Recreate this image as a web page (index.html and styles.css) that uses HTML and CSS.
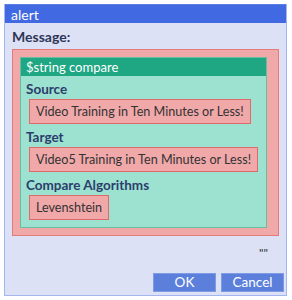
FILE: index.html
```html
<!DOCTYPE html>
<html lang="en">
<head>
    <meta charset="UTF-8">
    <meta name="viewport" content="width=device-width, initial-scale=1.0">
    <title>alert</title>
    <link rel="stylesheet" href="styles.css">
</head>
<body>
    <div class="dialog">
        <div class="dialog-title">alert</div>

        <div class="dialog-body">
            <div class="field-label">Message:</div>

            <div class="message">
                <div class="panel">
                    <div class="panel-title">$string compare</div>
                    <div class="panel-body">
                        <div class="panel-label">Source</div>
                        <div class="value">Video Training in Ten Minutes or Less!</div>

                        <div class="panel-label">Target</div>
                        <div class="value">Video5 Training in Ten Minutes or Less!</div>

                        <div class="panel-label">Compare Algorithms</div>
                        <div class="value">Levenshtein</div>
                    </div>
                </div>
            </div>

            <div class="result">""</div>
        </div>

        <div class="dialog-buttons">
            <button type="button">OK</button>
            <button type="button">Cancel</button>
        </div>
    </div>
</body>
</html>
```

FILE: styles.css
```css
body {
    margin: 0;
    background: #fff;
    font-family: Lato, Arial, sans-serif;
    font-size: 13px;
    color: #333;
}
.dialog {
    display: flex;
    flex-direction: column;
    box-sizing: border-box;
    width: 283px;
    height: 292px;
    margin: 4px 0 0 4px;
    background: #dce1f5;
    border: 1px solid #a4b6f2;
    border-top: none;
}
.dialog-title {
    height: 19px;
    line-height: 19px;
    padding-left: 6px;
    background: #4169e1;
    border-top: 1px solid #5a7ee6;
    box-sizing: border-box;
    color: #fff;
    font-size: 14px;
}
.dialog-body {
    padding: 6px 7px 0 7px;
    white-space: nowrap;
}
.field-label {
    line-height: 16px;
    margin-bottom: 4px;
    font-size: 14px;
    font-weight: bold;
    color: #2f3658;
}
.message {
    padding: 7px 10px 7px 7px;
    background: #f0a8a9;
    border: 1px solid #e57a7a;
}
.panel {
    width: fit-content;
    background: #9de2d0;
    border: 1px solid #69bc9f;
}
.panel-title {
    height: 18px;
    line-height: 18px;
    padding-left: 5px;
    background: #1fa683;
    color: #fff;
    font-size: 13px;
}
.panel-body {
    padding: 0 8px 7px 5px;
}
.panel-label {
    margin-top: 5px;
    margin-bottom: 2px;
    line-height: 16px;
    font-size: 13.5px;
    font-weight: bold;
    color: #2c3d6c;
}
.value {
    width: fit-content;
    margin-left: 3px;
    padding: 0 6px;
    line-height: 23px;
    background: #f0a8a9;
    border: 1px solid #e06a6a;
    font-size: 12.6px;
}
.result {
    margin-top: 10px;
    text-align: right;
    padding-right: 11px;
    line-height: 14px;
    font-size: 12px;
    color: #333;
}
.dialog-buttons {
    display: flex;
    justify-content: flex-end;
    gap: 5px;
    margin-top: auto;
    padding: 0 2px 3px 0;
}
.dialog-buttons button {
    width: 63px;
    height: 19px;
    padding: 0;
    background: #5c7fdc;
    border: 1px solid #7f9be4;
    color: #fff;
    font-family: Lato, Arial, sans-serif;
    font-size: 13.5px;
    line-height: 17px;
}
```
